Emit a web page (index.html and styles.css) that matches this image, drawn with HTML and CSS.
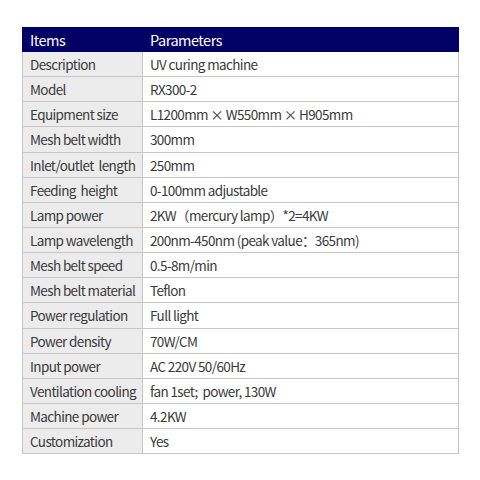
FILE: index.html
```html
<!DOCTYPE html>
<html>
<head>
<meta charset="utf-8">
<link rel="stylesheet" href="styles.css">
</head>
<body>
<table class="spec">
  <thead>
    <tr><th class="k">Items</th><th class="v">Parameters</th></tr>
  </thead>
  <tbody>
    <tr><td class="k">Description</td><td class="v">UV curing machine</td></tr>
    <tr><td class="k">Model</td><td class="v">RX300-2</td></tr>
    <tr><td class="k">Equipment size</td><td class="v">L1200mm × W550mm × H905mm</td></tr>
    <tr><td class="k">Mesh belt width</td><td class="v">300mm</td></tr>
    <tr><td class="k">Inlet/outlet&nbsp; length</td><td class="v">250mm</td></tr>
    <tr><td class="k">Feeding&nbsp; height</td><td class="v">0-100mm adjustable</td></tr>
    <tr><td class="k">Lamp power</td><td class="v">2KW（mercury lamp）*2=4KW</td></tr>
    <tr><td class="k">Lamp wavelength</td><td class="v">200nm-450nm (peak value：365nm)</td></tr>
    <tr><td class="k">Mesh belt speed</td><td class="v">0.5-8m/min</td></tr>
    <tr><td class="k">Mesh belt material</td><td class="v">Teflon</td></tr>
    <tr><td class="k">Power regulation</td><td class="v">Full light</td></tr>
    <tr><td class="k">Power density</td><td class="v">70W/CM</td></tr>
    <tr><td class="k">Input power</td><td class="v">AC 220V 50/60Hz</td></tr>
    <tr><td class="k">Ventilation cooling</td><td class="v">fan 1set;&nbsp; power, 130W</td></tr>
    <tr><td class="k">Machine power</td><td class="v">4.2KW</td></tr>
    <tr><td class="k">Customization</td><td class="v">Yes</td></tr>
  </tbody>
</table>
</body>
</html>
```
FILE: styles.css
```css
html, body {
  margin: 0;
  padding: 0;
  background: #ffffff;
}
body {
  padding: 27px 0 0 22px;
  font-family: "Noto Sans CJK SC", "Noto Sans", sans-serif;
  font-size: 13.5px;
  font-weight: 400;
  letter-spacing: -0.62px;
  color: #3a3a3a;
}
.spec {
  border-collapse: collapse;
  width: 437px;
  table-layout: fixed;
}
.spec th {
  background: #010064;
  color: #ffffff;
  font-weight: 400;
  text-align: left;
  height: 23px;
  padding: 0 7px;
  font-size: 14.5px;
  letter-spacing: -0.5px;
  line-height: 23px;
  border: 1px solid #010064;
}
.spec th.v {
  border-left: 1px solid #9a9ac0;
}
.spec td {
  height: 24.15px;
  padding: 0 7px;
  line-height: 16px;
  border: 1px solid #c6c6c6;
  white-space: nowrap;
}
.spec .k {
  width: 105px;
}
.spec td.k {
  background: #ececec;
}
.spec td.v {
  background: #ffffff;
}
```
